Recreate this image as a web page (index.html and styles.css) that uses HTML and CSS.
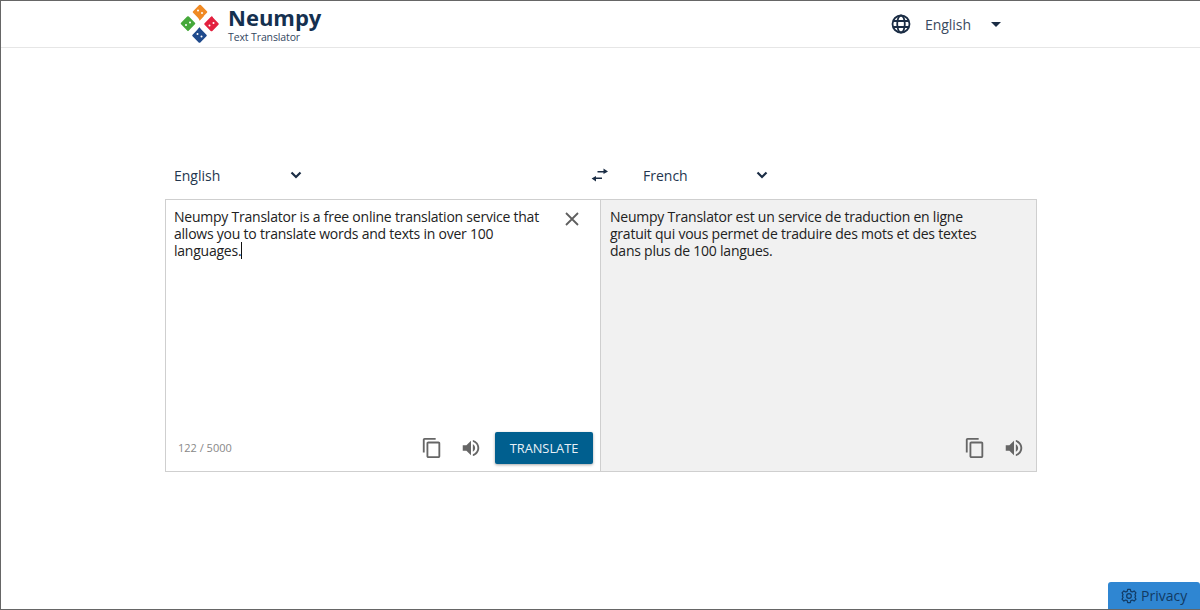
FILE: index.html
```html
<!DOCTYPE html>
<html lang="en">
<head>
<meta charset="utf-8">
<title>Neumpy Text Translator</title>
<link rel="stylesheet" href="styles.css">
</head>
<body>
<div class="page">
  <header class="header">
    <div class="brand">
      <svg class="logo" width="40" height="40" viewBox="0 0 40 40">
        <g transform="translate(20 8)"><g transform="rotate(45)"><rect x="-5.500" y="-5.500" width="11" height="11" rx="1.200" fill="#f08a24"/><path d="M0 4L5.500 0 6 6.500z" fill="#f08a24"/></g><circle cx="-2" cy="-1.500" r="1" fill="#fff"/><circle cx="2" cy="1" r="1" fill="#fff"/></g>
        <g transform="translate(8 19.500)"><g transform="rotate(45)"><rect x="-5.500" y="-5.500" width="11" height="11" rx="1.200" fill="#45a83a"/><path d="M4-1L5.500 5.500-1 4z" fill="#45a83a"/></g><circle cx="-2" cy="1.500" r="1" fill="#fff"/><circle cx="2" cy="-1" r="1" fill="#fff"/></g>
        <g transform="translate(31.500 20)"><g transform="rotate(45)"><rect x="-5.500" y="-5.500" width="11" height="11" rx="1.200" fill="#e3213f"/><path d="M-4-1L-5.500-6 1-4z" fill="#e3213f"/></g><circle cx="-2" cy="1.500" r="1" fill="#fff"/><circle cx="2" cy="-1" r="1" fill="#fff"/></g>
        <g transform="translate(19.500 31.500)"><g transform="rotate(45)"><rect x="-5.500" y="-5.500" width="11" height="11" rx="1.200" fill="#1f4a8c"/><path d="M0-4L-6-6-5 0z" fill="#1f4a8c"/></g><circle cx="-2" cy="-1.500" r="1" fill="#fff"/><circle cx="2" cy="1" r="1" fill="#fff"/></g>
      </svg>
      <div class="brand-text">
        <div class="brand-name">Neumpy</div>
        <div class="brand-sub">Text Translator</div>
      </div>
    </div>
    <div class="site-lang">
      <svg width="20" height="20" viewBox="0 0 20 20" fill="none" stroke="#1b2d45" stroke-width="1.800">
        <circle cx="10" cy="10" r="8.500"/>
        <ellipse cx="10" cy="10" rx="3.800" ry="8.500"/>
        <path d="M2 7h16M2 13h16"/>
      </svg>
      <span class="site-lang-label">English</span>
      <span class="caret"></span>
    </div>
  </header>

  <main class="main">
    <div class="selectors">
      <div class="select-left">
        <span class="lang">English</span>
        <svg class="chev" width="12" height="8" viewBox="0 0 12 8"><path d="M1.500 1.500L6 6l4.500-4.500" fill="none" stroke="#1b2d45" stroke-width="2.200"/></svg>
      </div>
      <svg class="swap" width="18" height="14" viewBox="0 0 18 14" fill="#1b2d45">
        <path d="M6.500 3h6V.6L17 3.600 12.500 6V4.400h-6z"/>
        <path d="M11 9.400H5V8L.6 10.600 5 13.400v-2.500h6z"/>
      </svg>
      <div class="select-right">
        <span class="lang">French</span>
        <svg class="chev" width="12" height="8" viewBox="0 0 12 8"><path d="M1.500 1.500L6 6l4.500-4.500" fill="none" stroke="#1b2d45" stroke-width="2.200"/></svg>
      </div>
    </div>

    <div class="panels">
      <section class="panel panel-source">
        <div class="text-row">
          <p class="text source-text">Neumpy Translator is a free online translation service that allows you to translate words and texts in over 100 languages.<span class="cursor"></span></p>
          <svg class="clear" width="14" height="14" viewBox="0 0 14 14"><path d="M1 1l12 12M13 1L1 13" stroke="#5f5f5f" stroke-width="1.800" fill="none"/></svg>
        </div>
        <div class="footer-row">
          <span class="count">122 / 5000</span>
          <div class="actions">
            <svg class="icon" width="22" height="22" viewBox="0 0 24 24" fill="#666"><path d="M16 1H4c-1.100 0-2 .9-2 2v14h2V3h12V1zm3 4H8c-1.100 0-2 .9-2 2v14c0 1.100.9 2 2 2h11c1.100 0 2-.9 2-2V7c0-1.100-.9-2-2-2zm0 16H8V7h11v14z"/></svg>
            <svg class="icon" width="22" height="22" viewBox="0 0 24 24" fill="#666"><path d="M3 9v6h4l5 5V4L7 9H3zm13.500 3c0-1.800-1-3.300-2.500-4v8c1.500-.7 2.500-2.200 2.500-4zM14 3.200v2.100c2.900.9 5 3.500 5 6.700s-2.100 5.800-5 6.700v2.100c4-.9 7-4.500 7-8.800s-3-7.900-7-8.800z"/></svg>
            <button class="translate" type="button">TRANSLATE</button>
          </div>
        </div>
      </section>
      <section class="panel panel-target">
        <p class="text target-text">Neumpy Translator est un service de traduction en ligne gratuit qui vous permet de traduire des mots et des textes dans plus de 100 langues.</p>
        <div class="footer-row footer-end">
          <div class="actions">
            <svg class="icon" width="22" height="22" viewBox="0 0 24 24" fill="#666"><path d="M16 1H4c-1.100 0-2 .9-2 2v14h2V3h12V1zm3 4H8c-1.100 0-2 .9-2 2v14c0 1.100.9 2 2 2h11c1.100 0 2-.9 2-2V7c0-1.100-.9-2-2-2zm0 16H8V7h11v14z"/></svg>
            <svg class="icon" width="22" height="22" viewBox="0 0 24 24" fill="#666"><path d="M3 9v6h4l5 5V4L7 9H3zm13.500 3c0-1.800-1-3.300-2.500-4v8c1.500-.7 2.500-2.200 2.500-4zM14 3.200v2.100c2.900.9 5 3.500 5 6.700s-2.100 5.800-5 6.700v2.100c4-.9 7-4.500 7-8.800s-3-7.900-7-8.800z"/></svg>
          </div>
        </div>
      </section>
    </div>
  </main>

  <button class="privacy" type="button">
    <svg width="16" height="16" viewBox="0 0 24 24" fill="none" stroke="#123a63" stroke-width="1.800" stroke-linejoin="round"><circle cx="12" cy="12" r="3.500"/><path d="M10 2h4l.7 3 2.300 1 2.700-1.600 2.800 2.800L20.900 10l1.100 2-1.100 2 1.600 2.800-2.800 2.800-2.700-1.600-2.300 1-.7 3h-4l-.7-3-2.300-1-2.700 1.600-2.800-2.800L3.100 14 2 12l1.100-2-1.600-2.800 2.800-2.800L7 6l2.300-1z"/></svg>
    <span>Privacy</span>
  </button>
</div>
</body>
</html>
```
FILE: styles.css
```css
* { box-sizing: border-box; }
html, body { margin: 0; height: 100%; }
body { font-family: "Open Sans", "Noto Sans", sans-serif; color: #1b2d45; background: #fff; overflow: hidden; }
.page { position: relative; height: 610px; border: 1px solid #666; border-right: 0; overflow: hidden; }
.header { height: 47px; border-bottom: 1px solid #e6e6e6; display: flex; justify-content: space-between; align-items: center; padding-left: 179px; padding-right: 199px; }
.brand { display: flex; align-items: center; gap: 8px; }
.logo { display: block; }
.brand-text { display: flex; flex-direction: column; margin-bottom: 3px; }
.brand-name { font-size: 22px; font-weight: 700; line-height: 28px; color: #15304f; }
.brand-sub { font-size: 10.500px; letter-spacing: -.12px; line-height: 12px; color: #33475f; }
.site-lang { display: flex; align-items: center; }
.site-lang-label { font-size: 14px; letter-spacing: -.05px; color: #3a4a60; margin-left: 14px; margin-right: 20px; }
.caret { border: 5px solid transparent; border-top-color: #1b2d45; border-bottom: 0; }
.main { width: 872px; margin: 112px 0 0 164px; }
.selectors { display: flex; align-items: center; height: 39px; }
.select-left { width: 426px; display: flex; align-items: center; padding-left: 9px; }
.select-right { display: flex; align-items: center; margin-left: 34px; }
.select-left .lang { width: 116px; }
.select-right .lang { width: 113px; }
.lang { font-size: 14px; font-weight: 500; letter-spacing: 0; color: #24364e; margin-bottom: 8px; }
.chev { display: block; margin-bottom: 10px; }
.swap { display: block; margin-bottom: 9px; }
.panels { display: flex; height: 273px; border: 1px solid #cfcfcf; }
.panel { display: flex; flex-direction: column; justify-content: space-between; }
.panel-source { width: 435px; border-right: 1px solid #cfcfcf; padding: 8px 7px 7px 8px; }
.panel-target { flex: 1; background: #f1f1f1; padding: 8px 11px 7px 9px; }
.text-row { display: flex; justify-content: space-between; align-items: flex-start; }
.text { margin: 0; font-size: 14px; letter-spacing: -.23px; line-height: 17px; color: #222; }
.source-text { width: 372px; }
.target-text { width: 375px; }
.cursor { display: inline-block; width: 1px; height: 17px; background: #111; vertical-align: top; }
.clear { margin: 4px 14px 0 0; display: block; }
.footer-row { display: flex; justify-content: space-between; align-items: center; min-height: 32px; }
.footer-end { justify-content: flex-end; }
.count { font-size: 11px; color: #888; margin: 0 0 2px 4px; }
.actions { display: flex; align-items: center; gap: 17px; }
.icon { display: block; }
.translate { width: 98px; height: 32px; border: 0; border-radius: 2px; background: #005f8f; color: #e8f0f6; font-family: inherit; font-size: 12.800px; margin-left: -4px; box-shadow: 0 1px 3px rgba(0,0,0,.35); }
.privacy { position: absolute; right: 0; bottom: 0; width: 92px; height: 27px; display: flex; align-items: center; gap: 4px; padding: 0 0 0 13px; border: 0; border-radius: 3px 3px 0 0; background: #2f86d2; color: #123a63; font-family: inherit; font-size: 14px; font-weight: 500; }
```
